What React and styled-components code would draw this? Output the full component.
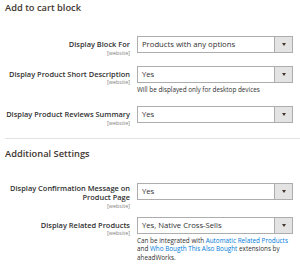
import styled, { createGlobalStyle } from "styled-components";

const GlobalStyle = createGlobalStyle`
  html, body {
    margin: 0;
    background: #ffffff;
    font-family: "Open Sans", "Noto Sans", sans-serif;
    color: #303030;
  }
`;

const Page = styled.div`
  width: 300px;
  height: 264px;
  overflow: hidden;
  padding-left: 5px;
  box-sizing: border-box;
`;

const Section = styled.section`
  padding-top: ${(p) => p.$top}px;
`;

const Title = styled.h2`
  margin: 0;
  font-size: 9.3px;
  line-height: 12px;
  font-weight: 600;
  color: #41362f;
  white-space: nowrap;
`;

const Divider = styled.hr`
  margin: ${(p) => p.$space}px 0 0;
  border: none;
  border-top: 1px solid #e3e3e3;
`;

const Row = styled.div`
  display: grid;
  grid-template-columns: 125px 156px;
  column-gap: 7px;
  align-items: start;
  margin-top: ${(p) => p.$top}px;
`;

const Label = styled.div`
  text-align: right;
  padding-top: ${(p) => p.$pad ?? 4}px;
`;

const LabelText = styled.div`
  font-size: 7.45px;
  line-height: 9.5px;
  font-weight: 600;
  color: #303030;
`;

const Scope = styled.div`
  font-size: 5.4px;
  line-height: 6px;
  color: #808080;
`;

const Select = styled.div`
  display: flex;
  height: 17px;
  box-sizing: border-box;
  border: 1px solid #adadad;
  background: #ffffff;
`;

const Value = styled.div`
  flex: 1;
  padding-left: 4px;
  font-size: 7.7px;
  line-height: 15px;
  color: #303030;
  white-space: nowrap;
  overflow: hidden;
`;

const Arrow = styled.div`
  width: 17px;
  background: #e3e3e3;
  border-left: 1px solid #adadad;
  display: flex;
  align-items: center;
  justify-content: center;

  &::after {
    content: "";
    border-left: 2.5px solid transparent;
    border-right: 2.5px solid transparent;
    border-top: 3px solid #41362f;
  }
`;

const Note = styled.div`
  margin-top: 3px;
  font-size: 6.35px;
  line-height: 8.6px;
  color: #303030;
`;

const Link = styled.span`
  color: #007bdb;
`;

const Field = ({ label, value, top, pad, children }) => (
  <Row $top={top}>
    <Label $pad={pad}>
      <LabelText>{label}</LabelText>
      <Scope>[website]</Scope>
    </Label>
    <div>
      <Select>
        <Value>{value}</Value>
        <Arrow />
      </Select>
      {children}
    </div>
  </Row>
);

const App = () => (
  <Page>
    <GlobalStyle />
    <Section $top={2}>
      <Title>Add to cart block</Title>
      <Field label="Display Block For" value="Products with any options" top={22} />
      <Field label="Display Product Short Description" value="Yes" top={10}>
        <Note>Will be displayed only for desktop devices</Note>
      </Field>
      <Field label="Display Product Reviews Summary" value="Yes" top={12} />
    </Section>
    <Divider $space={12} />
    <Section $top={9}>
      <Title>Additional Settings</Title>
      <Field
        label="Display Confirmation Message on Product Page"
        value="Yes"
        top={23}
        pad={1}
      />
      <Field label="Display Related Products" value="Yes, Native Cross-Sells" top={8}>
        <Note>
          Can be integrated with <Link>Automatic Related Products</Link> and{" "}
          <Link>Who Bougth This Also Bought</Link> extensions by aheadWorks.
        </Note>
      </Field>
    </Section>
  </Page>
);

export default App;
